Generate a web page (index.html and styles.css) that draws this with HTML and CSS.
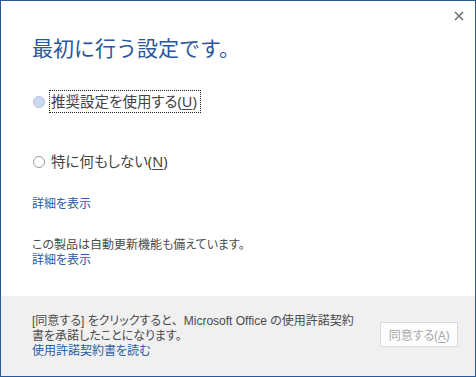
FILE: index.html
```html
<!DOCTYPE html>
<html lang="ja">
<head>
<meta charset="utf-8">
<link rel="stylesheet" href="styles.css">
</head>
<body>
<div class="window">
  <button class="close" aria-label="閉じる">
    <svg width="10" height="10" viewBox="0 0 10 10"><path d="M1 1L9 9M9 1L1 9" stroke="#6f6f6f" stroke-width="1.6" fill="none"/></svg>
  </button>
  <div class="main">
    <h1 class="title">最初に行う設定です。</h1>
    <div class="radio-row first">
      <span class="radio checked"></span>
      <span class="label focused">推奨設定を使用する(<u>U</u>)</span>
    </div>
    <div class="radio-row second">
      <span class="radio"></span>
      <span class="label">特に何もしない(<u>N</u>)</span>
    </div>
    <a class="link details" href="#">詳細を表示</a>
    <p class="info">この製品は自動更新機能も備えています。</p>
    <a class="link" href="#">詳細を表示</a>
  </div>
  <div class="footer">
    <div class="terms">
      <p>[同意する] をクリックすると<span class="punct">、</span>Microsoft Office の使用許諾契約<br>書を承諾したことになります。</p>
      <a class="link" href="#">使用許諾契約書を読む</a>
    </div>
    <button class="agree" disabled>同意する(<u>A</u>)</button>
  </div>
</div>
</body>
</html>
```

FILE: styles.css
```css
* { box-sizing: border-box; }
html, body { margin: 0; padding: 0; background: #fff; }
body {
  font-family: "Noto Sans", "Noto Sans CJK JP", sans-serif;
  color: #444;
}
.window {
  position: relative;
  width: 476px;
  height: 377px;
  border: 1px solid #2b579a;
  display: flex;
  flex-direction: column;
  background: #fff;
}
.close {
  position: absolute;
  top: 9px;
  right: 10px;
  width: 12px;
  height: 12px;
  padding: 0;
  border: 0;
  background: none;
  display: flex;
  align-items: center;
  justify-content: center;
}
.main {
  flex: 1;
  padding: 32px 31px 0 31px;
  display: flex;
  flex-direction: column;
  align-items: flex-start;
}
.title {
  margin: 0;
  font-family: "Noto Sans CJK JP", sans-serif;
  font-weight: normal;
  font-size: 21px;
  line-height: 28px;
  color: #2b579a;
}
.radio-row {
  display: flex;
  align-items: center;
  height: 23px;
  font-family: "Noto Sans", "Noto Sans CJK JP", sans-serif;
  font-feature-settings: "palt";
  font-size: 14.5px;
  color: #444;
}
.radio-row.first { margin-top: 29px; }
.radio-row.second { margin-top: 37px; }
.radio {
  width: 12px;
  height: 12px;
  border-radius: 50%;
  border: 1px solid #9a9a9a;
  background: #fff;
  margin-left: 1px;
  margin-right: 4px;
}
.radio.checked {
  background: #cbd8ef;
  border-color: #b3c5e6;
}
.label {
  display: flex;
  align-items: center;
  height: 23px;
  padding: 0 3px 0 1px;
  border: 1px dotted transparent;
  line-height: 21px;
}
.label.focused { border-color: #222; }
.label u { text-underline-offset: 2px; }
.link, .info, .terms {
  font-family: "Liberation Sans", "Noto Sans CJK JP", sans-serif;
  font-size: 12px;
  line-height: 15px;
  font-feature-settings: "palt";
}
.link {
  display: block;
  color: #2a5ca6;
  text-decoration: none;
}
.details { margin-top: 24px; }
.info {
  margin: 26px 0 0 0;
  color: #4a4a4a;
}
.footer {
  height: 80px;
  flex: none;
  background: #f0f0f0;
  display: flex;
  align-items: flex-start;
  justify-content: space-between;
  padding: 18px 17px 0 31px;
}
.terms { color: #4a4a4a; }
.terms p { margin: 0; }
.punct { font-feature-settings: normal; }
.agree {
  margin-top: 8px;
  width: 78px;
  height: 25px;
  padding: 0;
  border: 1px solid #dadada;
  background: #fdfdfd;
  color: #a8a8a8;
  font-family: "Noto Sans", "Noto Sans CJK JP", sans-serif;
  font-feature-settings: "palt";
  font-size: 12px;
}
.agree u { text-underline-offset: 2px; }
```
